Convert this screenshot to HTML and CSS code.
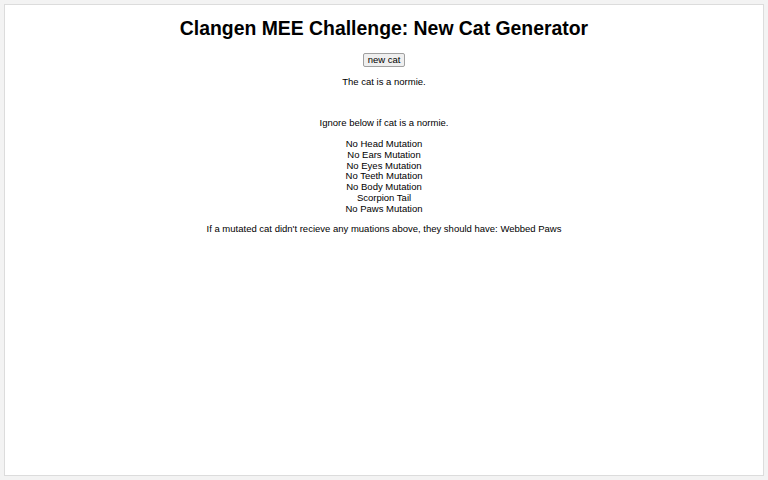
FILE: index.html
```html
<!DOCTYPE html>
<html>
<head>
<meta charset="utf-8">
<link rel="stylesheet" href="styles.css">
</head>
<body>
<div class="card">
  <h1 class="title">Clangen MEE Challenge: New Cat Generator</h1>
  <button class="btn">new cat</button>
  <p class="status">The cat is a normie.</p>
  <p class="note">Ignore below if cat is a normie.</p>
  <div class="list">
    <div>No Head Mutation</div>
    <div>No Ears Mutation</div>
    <div>No Eyes Mutation</div>
    <div>No Teeth Mutation</div>
    <div>No Body Mutation</div>
    <div>Scorpion Tail</div>
    <div>No Paws Mutation</div>
  </div>
  <p class="fallback">If a mutated cat didn't recieve any muations above, they should have: Webbed Paws</p>
</div>
</body>
</html>
```
FILE: styles.css
```css
html, body {
  margin: 0;
  height: 100%;
}
body {
  background: #f3f3f3;
  padding: 4px;
  box-sizing: border-box;
  font-family: "Liberation Sans", Arial, sans-serif;
  font-size: 9.5px;
  color: #000;
}
.card {
  background: #fff;
  border: 1px solid #dcdcdc;
  height: 100%;
  box-sizing: border-box;
  display: flex;
  flex-direction: column;
  align-items: center;
  text-align: center;
}
.title {
  font-size: 19.4px;
  font-weight: bold;
  margin: 12px 0 0;
  line-height: 23px;
}
.btn {
  margin-top: 13px;
  font-family: "Liberation Sans", Arial, sans-serif;
  font-size: 9.5px;
  line-height: 12px;
  padding: 0 4px;
  background: #efefef;
  border: 1px solid #a0a0a0;
  border-radius: 2px;
  color: #000;
}
.status {
  margin: 9px 0 0;
  line-height: 11px;
}
.note {
  margin: 30px 0 0;
  line-height: 11px;
}
.list {
  margin-top: 11px;
  line-height: 10.8px;
}
.fallback {
  margin: 8px 0 0;
  line-height: 11px;
}
```
